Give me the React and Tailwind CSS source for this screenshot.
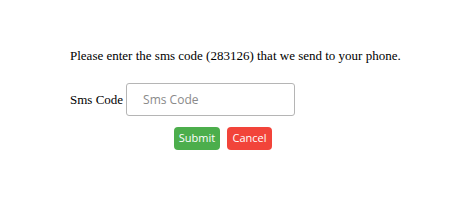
export default function App() {
  return (
    <div className="w-[474px] h-[215px] bg-white pt-[47px] pl-[70px]" style={{ fontFamily: '"Liberation Serif", serif' }}>
      <p className="text-[13px] leading-[17px] text-black">Please enter the sms code (283126) that we send to your phone.</p>
      <div className="flex items-center mt-[19px]">
        <span className="text-[13px] text-black mr-[3px]">Sms Code</span>
        <input
          className="w-[169px] h-[33px] border border-[#b5b5b5] rounded-[3px] pl-[16px] text-[12px] outline-none placeholder:text-[#8a8a8a]"
          style={{ fontFamily: '"Open Sans", "Noto Sans", sans-serif' }}
          placeholder="Sms Code"
        />
      </div>
      <div className="flex gap-[7px] mt-[11px] ml-[104px]" style={{ fontFamily: '"Open Sans", "Noto Sans", sans-serif' }}>
        <button className="w-[46px] h-[23px] rounded-[4px] bg-[#4cae4c] text-white text-[11px]">Submit</button>
        <button className="w-[45px] h-[23px] rounded-[4px] bg-[#f2443a] text-white text-[11px]">Cancel</button>
      </div>
    </div>
  );
}
